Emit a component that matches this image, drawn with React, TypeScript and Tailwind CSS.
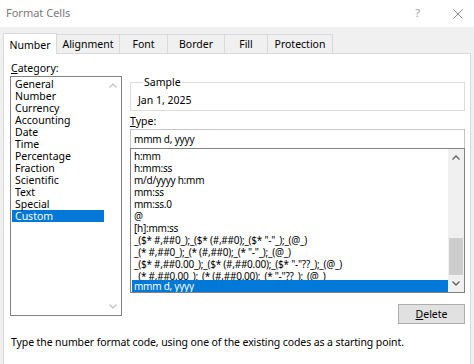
import React from "react"

const font = { fontFamily: '"Noto Sans", "Open Sans", sans-serif' }

const categories = [
    "General", "Number", "Currency", "Accounting", "Date", "Time",
    "Percentage", "Fraction", "Scientific", "Text", "Special", "Custom",
]

const codes = [
    "h:mm",
    "h:mm:ss",
    "m/d/yyyy h:mm",
    "mm:ss",
    "mm:ss.0",
    "@",
    "[h]:mm:ss",
    '_($* #,##0_);_($* (#,##0);_($* "-"_);_(@_)',
    '_(* #,##0_);_(* (#,##0);_(* "-"_);_(@_)',
    '_($* #,##0.00_);_($* (#,##0.00);_($* "-"??_);_(@_)',
]

const tabs = [
    { label: "Number", w: "w-[54px]" },
    { label: "Alignment", w: "w-[63px]" },
    { label: "Font", w: "w-[48px]" },
    { label: "Border", w: "w-[57px]" },
    { label: "Fill", w: "w-[43px]" },
    { label: "Protection", w: "w-[65px]" },
]

function Chevron({ up, color }: { up?: boolean; color: string }) {
    return (
        <svg width="8" height="5" viewBox="0 0 8 5">
            <polyline
                points={up ? "0.5,4.5 4,1 7.5,4.5" : "0.5,0.5 4,4 7.5,0.5"}
                fill="none"
                stroke={color}
                strokeWidth="1.3"
            />
        </svg>
    )
}

export default function App() {
    return (
        <div className="w-[474px] h-[364px] bg-[#f0f0f0] overflow-hidden text-[10.5px] text-black" style={font}>
            {/* title bar */}
            <div className="h-[27px] bg-white flex items-center pl-[6px] pr-[11px]">
                <span className="text-[11px] text-[#7a7a7a]">Format Cells</span>
                <span className="ml-auto text-[11px] text-[#9a9a9a] mr-[33px]">?</span>
                <svg width="10" height="10" viewBox="0 0 10 10">
                    <path d="M0.5 0.5 L9.5 9.5 M9.5 0.5 L0.5 9.5" stroke="#8a8a8a" strokeWidth="1" />
                </svg>
            </div>

            <div className="px-[3px] pt-[5px]">
                {/* tabs */}
                <div className="flex items-end h-[21px]">
                    {tabs.map((t, i) =>
                        i === 0 ? (
                            <div key={t.label}
                                className={`${t.w} h-[21px] -mb-px relative z-10 bg-white border border-b-0 border-[#d9d9d9] flex items-center justify-center leading-[14px] pt-[1px]`}>
                                {t.label}
                            </div>
                        ) : (
                            <div key={t.label}
                                className={`${t.w} h-[19px] border-t border-r border-[#d9d9d9] flex items-center justify-center leading-[14px]`}>
                                {t.label}
                            </div>
                        )
                    )}
                </div>

                {/* panel */}
                <div className="h-[313px] bg-white border border-[#d9d9d9] pt-[7px] pl-[6px]">
                    <div className="flex">
                        {/* left column */}
                        <div className="w-[112px] flex flex-col">
                            <div className="leading-[15px] pl-[1px]"><span className="underline">C</span>ategory:</div>
                            <div className="h-[240px] border border-[#828282] flex">
                                <div className="flex-1 pl-[1px] pt-[1px]">
                                    {categories.map((c) => (
                                        <div key={c}
                                            className={`h-[12px] leading-[12px] pl-[3px] ${c === "Custom" ? "bg-[#0078d7] text-white" : ""}`}>
                                            {c}
                                        </div>
                                    ))}
                                </div>
                                <div className="w-[17px] flex flex-col items-center justify-between py-[6px]">
                                    <Chevron up color="#c4c4c4" />
                                    <Chevron color="#c4c4c4" />
                                </div>
                            </div>
                        </div>

                        {/* right column */}
                        <div className="ml-[8px] w-[335px] flex flex-col">
                            <fieldset className="mt-[14px] border border-[#dcdcdc] pl-[7px] pb-[3px]">
                                <legend className="ml-[5px] px-[1px] leading-[14px]">Sample</legend>
                                <div className="pt-[4px] leading-[14px]">Jan 1, 2025</div>
                            </fieldset>

                            <div className="mt-[3px] leading-[14px] mb-[1px]"><span className="underline">T</span>ype:</div>
                            <div className="h-[19px] border border-b-0 border-[#c4c4c4] flex items-center pl-[3px] leading-[14px] text-[10px] tracking-[-0.2px]">
                                mmm d, yyyy
                            </div>
                            <div className="h-[145px] border border-[#828282] flex">
                                <div className="flex-1 pl-[1px] pt-[1px] overflow-hidden text-[10px] tracking-[-0.25px]">
                                    {codes.map((c) => (
                                        <div key={c} className="h-[12px] leading-[12px] pl-[2px] whitespace-pre">
                                            {c}
                                        </div>
                                    ))}
                                    <div className="h-[10px] leading-[12px] pl-[2px] whitespace-pre overflow-hidden">
                                        {'_(* #,##0.00_);_(* (#,##0.00);_(* "-"??_);_(@_)'}
                                    </div>
                                    <div className="h-[12px] leading-[12px] pl-[2px] bg-[#0078d7] text-white">
                                        mmm d, yyyy
                                    </div>
                                </div>
                                <div className="w-[16px] bg-[#f0f0f0] flex flex-col">
                                    <div className="h-[17px] flex items-center justify-center">
                                        <Chevron up color="#606060" />
                                    </div>
                                    <div className="flex-1" />
                                    <div className="h-[37px] mx-[1px] bg-[#cdcdcd]" />
                                    <div className="h-[17px] flex items-center justify-center">
                                        <Chevron color="#606060" />
                                    </div>
                                </div>
                            </div>

                            <button className="self-end mt-[11px] w-[67px] h-[20px] bg-[#e1e1e1] border border-[#adadad] leading-[14px]">
                                <span className="underline">D</span>elete
                            </button>
                        </div>
                    </div>

                    <div className="mt-[11px] pl-[1px] leading-[14px] tracking-[-0.1px]">
                        Type the number format code, using one of the existing codes as a starting point.
                    </div>
                </div>
            </div>
        </div>
    )
}
